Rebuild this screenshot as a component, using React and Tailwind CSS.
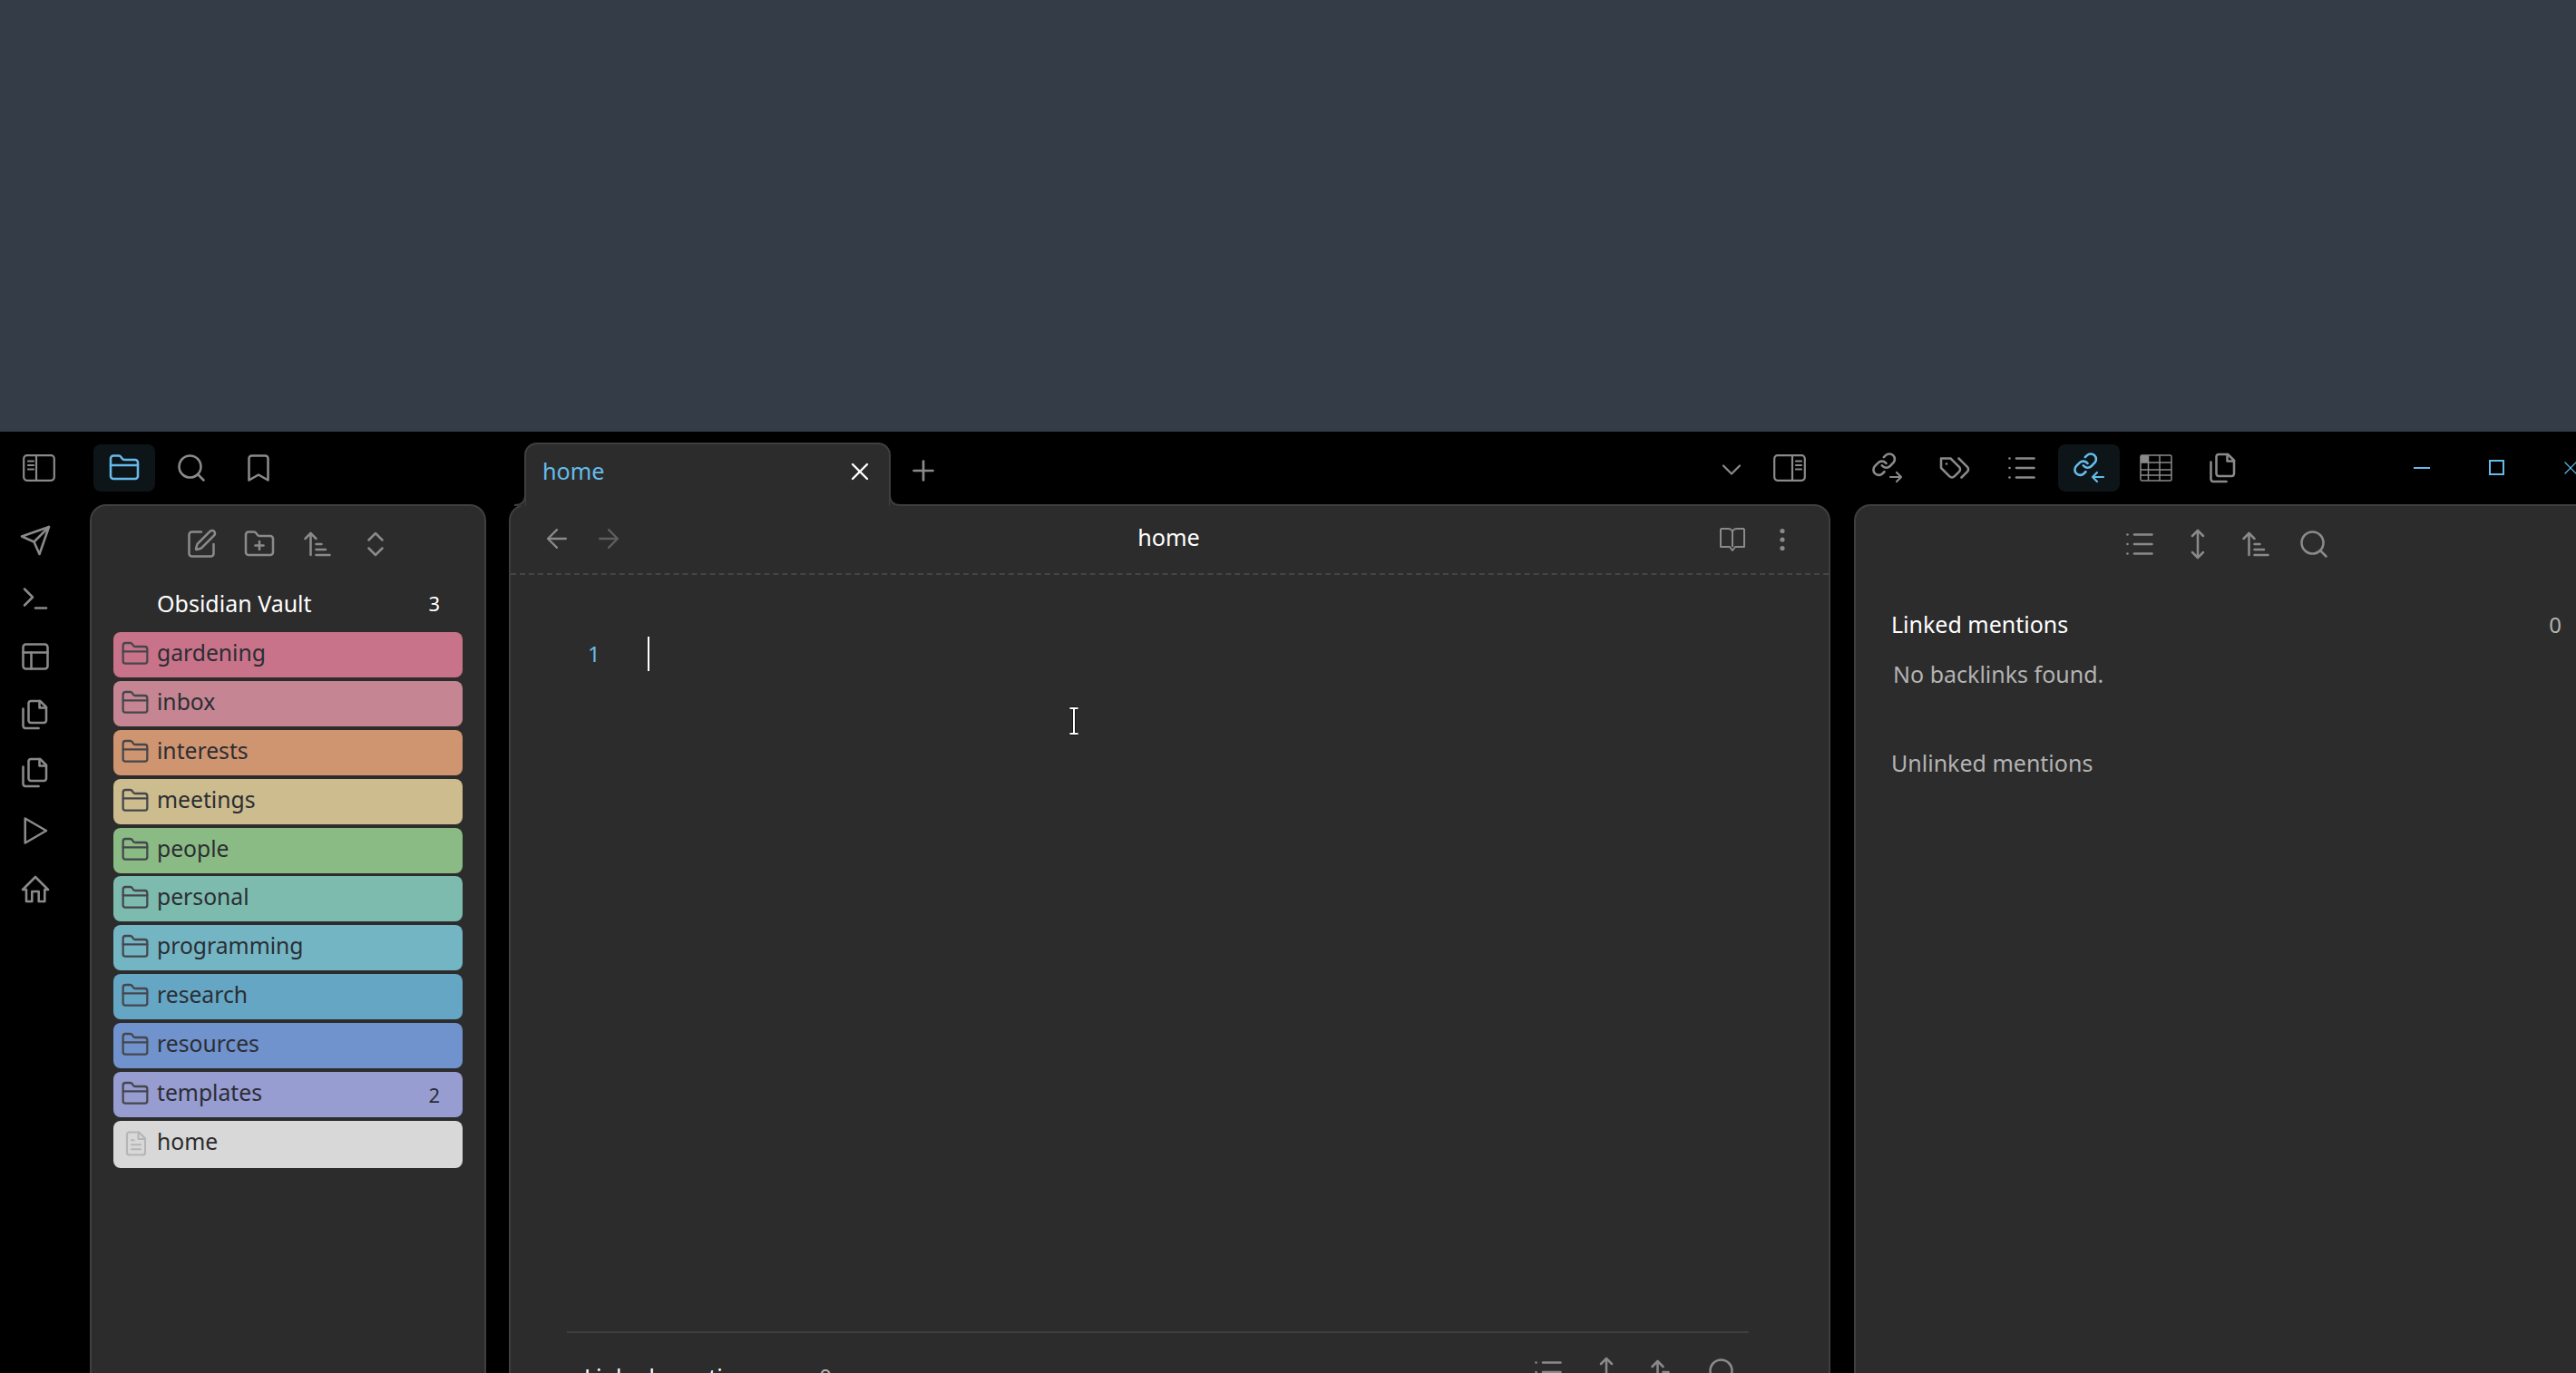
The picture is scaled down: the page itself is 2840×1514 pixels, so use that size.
import React from 'react';
import {
  ArrowLeft, ArrowRight, ArrowUpNarrowWide, Bookmark, ChevronDown, ChevronsUpDown,
  FolderClosed, FolderPlus, List, MoveVertical, PanelsTopLeft, Plus, Search, SquarePen, Terminal, X,
} from 'lucide-react';

const stroke = 1.7;

const Send = ({ className }) => (
  <svg viewBox="0 0 24 24" fill="none" stroke="currentColor" strokeWidth={stroke} strokeLinecap="round" strokeLinejoin="round" className={className}>
    <polygon points="22 2 15 22 11 13 2 9 22 2" />
    <line x1="22" y1="2" x2="11" y2="13" />
  </svg>
);

const Files = ({ className }) => (
  <svg viewBox="0 0 24 24" fill="none" stroke="currentColor" strokeWidth={stroke} strokeLinecap="round" strokeLinejoin="round" className={className}>
    <path d="M15.5 2H8.6c-.4 0-.8.2-1.1.5-.3.3-.5.7-.5 1.1v12.8c0 .4.2.8.5 1.1.3.3.7.5 1.1.5h9.8c.4 0 .8-.2 1.1-.5.3-.3.5-.7.5-1.1V6.5L15.5 2z" />
    <path d="M3 7.6v12.8c0 .4.2.8.5 1.1.3.3.7.5 1.1.5h9.8" />
    <path d="M15 2v5h5" />
  </svg>
);

const PlayIcon = ({ className }) => (
  <svg viewBox="0 0 24 24" fill="none" stroke="currentColor" strokeWidth={stroke} strokeLinejoin="round" className={className}>
    <polygon points="4.5 3 20 12 4.5 21" />
  </svg>
);

const HomeIcon = () => (
  <svg viewBox="0 0 32 32" fill="none" stroke="currentColor" strokeWidth="2.6" strokeLinejoin="round" className="size-[32px]">
    <path d="M16 3 30 17h-3.7v13h-6.6V19h-7.4v11H6V17H2z" />
  </svg>
);

const SidebarLeft = ({ className }) => (
  <svg viewBox="0 0 36 30" fill="none" stroke="currentColor" strokeWidth="2.2" strokeLinecap="round" className={className}>
    <rect x="1.2" y="1.2" width="33.6" height="27.6" rx="3.5" />
    <path d="M15 1.5v27M6 7.5h6M6 12h6M6 16.5h6" />
  </svg>
);

const SidebarRight = ({ className }) => (
  <svg viewBox="0 0 36 30" fill="none" stroke="currentColor" strokeWidth="2.2" strokeLinecap="round" className={className}>
    <rect x="1.2" y="1.2" width="33.6" height="27.6" rx="3.5" />
    <path d="M21 1.5v27M25 7.5h6M25 12h6M25 16.5h6" />
  </svg>
);

const chain = (
  <g transform="scale(1.18)">
    <path d="M10 13a5 5 0 0 0 7.54.54l3-3a5 5 0 0 0-7.07-7.07l-1.72 1.71" />
    <path d="M14 11a5 5 0 0 0-7.54-.54l-3 3a5 5 0 0 0 7.07 7.07l1.71-1.71" />
  </g>
);

const LinksOut = ({ className }) => (
  <svg viewBox="0 0 36 36" fill="none" stroke="currentColor" strokeWidth="2.2" strokeLinecap="round" strokeLinejoin="round" className={className}>
    {chain}
    <path d="M21 28h12M28 23l5 5-5 5" />
  </svg>
);

const LinksIn = ({ className }) => (
  <svg viewBox="0 0 36 36" fill="none" stroke="currentColor" strokeWidth="2.2" strokeLinecap="round" strokeLinejoin="round" className={className}>
    {chain}
    <path d="M34 28H22M27 23l-5 5 5 5" />
  </svg>
);

const Tags = ({ className }) => (
  <svg viewBox="0 0 24 24" fill="none" stroke="currentColor" strokeWidth={stroke} strokeLinecap="round" strokeLinejoin="round" className={className}>
    <path d="M9 5H2v7l6.29 6.29c.94.94 2.48.94 3.42 0l3.58-3.58c.94-.94.94-2.48 0-3.42L9 5Z" />
    <path d="M6 9.01V9" />
    <path d="m15 5 6.3 6.3a2.4 2.4 0 0 1 0 3.4L17 19" />
  </svg>
);

const TableIcon = ({ className }) => (
  <svg viewBox="0 0 36 30" fill="none" stroke="currentColor" strokeWidth="1.5" className={className}>
    <rect x="1" y="1" width="9" height="8" fill="currentColor" stroke="none" />
    <rect x="1" y="1" width="34" height="28" rx="1.5" />
    <path d="M9.5 1v28M22 1v28M1 9h34M1 17h34M1 23h34" />
  </svg>
);

const BookIcon = ({ className }) => (
  <svg viewBox="0 0 30 28" fill="none" stroke="currentColor" strokeWidth="2" strokeLinejoin="round" className={className}>
    <path d="M2 2h8c3 0 5 2 5 4v16M28 2h-8c-3 0-5 2-5 4" />
    <path d="M2 2v20h10l3 4 3-4h10V2" />
  </svg>
);

const Dots = ({ className }) => (
  <svg viewBox="0 0 8 30" fill="currentColor" className={className}>
    <circle cx="4" cy="5.5" r="2.6" />
    <circle cx="4" cy="15" r="2.6" />
    <circle cx="4" cy="24.5" r="2.6" />
  </svg>
);

const NoteIcon = ({ className }) => (
  <svg viewBox="0 0 24 24" fill="none" stroke="currentColor" strokeWidth={stroke} strokeLinecap="round" strokeLinejoin="round" className={className}>
    <path d="M14.5 2H6a2 2 0 0 0-2 2v16a2 2 0 0 0 2 2h12a2 2 0 0 0 2-2V7.5L14.5 2z" />
    <path d="M14 2v6h6" />
    <path d="M16 13H8M16 17H8M10 9H8" />
  </svg>
);

const ribbon = [Send, Terminal, PanelsTopLeft, Files, Files, PlayIcon, HomeIcon];

const folders = [
  { name: 'gardening', cls: 'bg-[#c8738a]' },
  { name: 'inbox', cls: 'bg-[#c58593]' },
  { name: 'interests', cls: 'bg-[#cf9470]' },
  { name: 'meetings', cls: 'bg-[#ccbc8e]' },
  { name: 'people', cls: 'bg-[#8bbb84]' },
  { name: 'personal', cls: 'bg-[#7cbbae]' },
  { name: 'programming', cls: 'bg-[#74b5c4]' },
  { name: 'research', cls: 'bg-[#64a6c4]' },
  { name: 'resources', cls: 'bg-[#7092cd]' },
  { name: 'templates', cls: 'bg-[#979cd1]', count: 2 },
];

const Row = ({ name, cls, count }) => (
  <div className={`h-[50px] rounded-[8px] flex items-center pl-[8px] pr-[25px] text-[#2b2d33] ${cls}`}>
    <FolderClosed strokeWidth={1.7} className="size-[32px] text-[#45474d] shrink-0 -mt-[2px]" />
    <span className="ml-[8px] text-[24.7px] -mt-[5px]">{name}</span>
    {count && <span className="ml-auto text-[22px]">{count}</span>}
  </div>
);

const IBeam = () => (
  <svg viewBox="0 0 14 34" className="absolute left-[614px] top-[220px] w-[14px] h-[34px]">
    <path d="M3 3h8M7 3v28M3 31h8" fill="none" stroke="#000" strokeOpacity="0.5" strokeWidth="4" />
    <path d="M2.5 3h9M7 3v28M2.5 31h9" fill="none" stroke="#fff" strokeWidth="2" />
  </svg>
);

export default function App() {
  return (
    <div className="w-[2840px] h-[1514px] overflow-hidden bg-black flex flex-col font-['Noto_Sans',sans-serif]">
      <div className="h-[476px] shrink-0 bg-[#343c47]" />

      {/* title bar */}
      <div className="h-[80px] shrink-0 flex text-[#8a8a8a]">
        <div className="w-[99px] shrink-0 pl-[25px] pt-[25px]">
          <SidebarLeft className="w-[36px] h-[30px]" />
        </div>
        <div className="w-[462px] shrink-0 pl-[4px] pt-[14px] flex gap-[6px]">
          <div className="w-[68px] h-[52px] rounded-[8px] bg-[#0d1518] flex items-center justify-center text-[#66bbea]">
            <FolderClosed strokeWidth={1.7} className="size-[36px]" />
          </div>
          <div className="w-[68px] h-[52px] flex items-center justify-center">
            <Search strokeWidth={1.7} className="size-[36px]" />
          </div>
          <div className="w-[68px] h-[52px] flex items-center justify-center">
            <Bookmark strokeWidth={1.7} className="size-[36px]" />
          </div>
        </div>

        <div className="w-[1483px] shrink-0 flex pl-[17px] pr-[53px]">
          <div className="relative z-10 mt-[12px] w-[404px] h-[70px] rounded-t-[14px] bg-[#2c2c2c] border-2 border-b-0 border-[#3f3f3f] flex items-start pl-[18px] pr-[16px]">
            <span className="text-[25.2px] leading-[36px] mt-[11px] text-[#66bbea]">home</span>
            <X strokeWidth={1.8} className="ml-auto mt-[14px] size-[32px] text-white" />
            <svg viewBox="0 0 12 12" className="absolute -right-[13px] bottom-0 size-[12px]">
              <path d="M0 0c0 7 4 11 12 11v1H0z" fill="#2c2c2c" />
              <path d="M0 0c0 7 4 11 12 11" fill="none" stroke="#3f3f3f" strokeWidth="2" />
            </svg>
            <svg viewBox="0 0 12 12" className="absolute -left-[13px] bottom-0 size-[12px]">
              <path d="M12 0c0 7-4 11-12 11v1h12z" fill="#2c2c2c" />
              <path d="M12 0c0 7-4 11-12 11" fill="none" stroke="#3f3f3f" strokeWidth="2" />
            </svg>
          </div>
          <Plus strokeWidth={1.8} className="ml-[18px] mt-[25px] size-[36px]" />
          <ChevronDown strokeWidth={1.5} className="ml-auto mt-[24px] size-[36px]" />
          <div className="ml-[28px] pt-[25px]">
            <SidebarRight className="w-[36px] h-[30px]" />
          </div>
        </div>

        <div className="w-[584px] shrink-0 pl-[3px] pt-[14px] flex gap-[6px]">
          <div className="w-[68px] h-[52px] flex items-center justify-center"><LinksOut className="size-[36px]" /></div>
          <div className="w-[68px] h-[52px] flex items-center justify-center"><Tags className="size-[36px]" /></div>
          <div className="w-[68px] h-[52px] flex items-center justify-center"><List strokeWidth={1.7} className="size-[36px]" /></div>
          <div className="w-[68px] h-[52px] rounded-[8px] bg-[#0d1518] flex items-center justify-center text-[#66bbea]"><LinksIn className="size-[36px]" /></div>
          <div className="w-[68px] h-[52px] flex items-center justify-center"><TableIcon className="w-[36px] h-[30px]" /></div>
          <div className="w-[68px] h-[52px] flex items-center justify-center"><Files className="size-[36px]" /></div>
        </div>

        <div className="w-[249px] shrink-0 flex text-[#66bbea]">
          <div className="w-[83px] pt-[39px] flex justify-center">
            <div className="w-[18px] h-[2px] bg-[#66bbea]" />
          </div>
          <div className="w-[83px] pt-[31px] flex justify-center">
            <div className="w-[17px] h-[17px] border-2 border-[#66bbea]" />
          </div>
          <div className="w-[83px] pt-[28px] flex justify-center">
            <X strokeWidth={1.2} className="size-[24px] -ml-[4px]" />
          </div>
        </div>
      </div>

      <div className="h-[958px] shrink-0 flex text-[#8a8a8a]">
        {/* ribbon */}
        <div className="w-[99px] shrink-0 pt-[8px]">
          {ribbon.map((Icon, i) => (
            <div key={i} className="w-[78px] h-[64px] flex items-center justify-center">
              <Icon strokeWidth={1.7} className="size-[36px]" />
            </div>
          ))}
        </div>

        {/* file tree */}
        <div className="w-[437px] shrink-0 rounded-t-[18px] bg-[#2c2c2c] border-2 border-b-0 border-[#3f3f3f]">
          <div className="h-[84px] flex items-center justify-center">
            <div className="w-[64px] flex justify-center"><SquarePen strokeWidth={1.7} className="size-[36px]" /></div>
            <div className="w-[64px] flex justify-center"><FolderPlus strokeWidth={1.7} className="size-[36px]" /></div>
            <div className="w-[64px] flex justify-center"><ArrowUpNarrowWide strokeWidth={1.7} className="size-[36px]" /></div>
            <div className="w-[64px] flex justify-center"><ChevronsUpDown strokeWidth={1.7} className="size-[36px]" /></div>
          </div>
          <div className="h-[55px] flex items-center pl-[72px] pr-[49px] text-white -mt-[4px] mb-[4px]">
            <span className="text-[25px]">Obsidian Vault</span>
            <span className="ml-auto text-[22px]">3</span>
          </div>
          <div className="ml-[24px] w-[385px] flex flex-col gap-[3.9px]">
            {folders.map((f) => (
              <Row key={f.name} {...f} />
            ))}
            <div className="h-[52px] rounded-[8px] flex items-center pl-[10px] bg-[#d8d8d8] text-[#2b2b2b]">
              <NoteIcon className="size-[30px] text-[#b5b5b5] shrink-0 -mt-[2px]" />
              <span className="ml-[8px] text-[24.7px] -mt-[7px]">home</span>
            </div>
          </div>
        </div>

        {/* editor */}
        <div className="relative ml-[25px] w-[1457px] shrink-0 rounded-t-[18px] bg-[#2c2c2c] border-2 border-b-0 border-[#3f3f3f] overflow-hidden">
          <div className="h-[76px] flex items-center border-b-2 border-dashed border-[#454545] pb-[2px]">
            <div className="flex-1 flex pl-[22px]">
              <div className="w-[57px] flex justify-center"><ArrowLeft strokeWidth={1.6} className="size-[34px]" /></div>
              <div className="w-[57px] flex justify-center text-[#5e5e5e]"><ArrowRight strokeWidth={1.6} className="size-[34px]" /></div>
            </div>
            <span className="text-[25.2px] leading-[36px] -mt-[4px] text-white">home</span>
            <div className="flex-1 flex justify-end items-center pr-[24px] mt-[2px]">
              <div className="w-[55px] flex justify-center"><BookIcon className="w-[30px] h-[28px]" /></div>
              <div className="w-[55px] flex justify-center"><Dots className="w-[8px] h-[30px]" /></div>
            </div>
          </div>
          <div className="h-[834px] pl-[85px] pt-[68px] flex items-start">
            <span className="w-[66px] text-[24px] leading-[38px] text-[#66bbea]">1</span>
            <div className="w-[2px] h-[38px] bg-white" />
          </div>
          <div className="ml-[62px] mr-[88px] h-[2px] bg-[#3f3f3f]" />
          <div className="flex items-start pl-[81px] pt-[30px] pr-[85px]">
            <span className="text-[25px] leading-[36px] text-white">Linked mentions</span>
            <span className="ml-[64px] text-[24px] leading-[36px] text-[#b3b3b3]">0</span>
            <div className="ml-auto flex -mt-[5px]">
              <div className="w-[64px] flex justify-center"><List strokeWidth={1.7} className="size-[36px]" /></div>
              <div className="w-[64px] flex justify-center"><MoveVertical strokeWidth={1.7} className="size-[36px]" /></div>
              <div className="w-[64px] flex justify-center"><ArrowUpNarrowWide strokeWidth={1.7} className="size-[36px]" /></div>
              <div className="w-[64px] flex justify-center"><Search strokeWidth={1.7} className="size-[36px]" /></div>
            </div>
          </div>
          <IBeam />
        </div>

        {/* backlinks */}
        <div className="ml-[26px] w-[822px] shrink-0 rounded-t-[18px] bg-[#2c2c2c] border-2 border-b-0 border-[#3f3f3f]">
          <div className="h-[84px] flex items-center justify-center">
            <div className="w-[64px] flex justify-center"><List strokeWidth={1.7} className="size-[36px]" /></div>
            <div className="w-[64px] flex justify-center"><MoveVertical strokeWidth={1.7} className="size-[36px]" /></div>
            <div className="w-[64px] flex justify-center"><ArrowUpNarrowWide strokeWidth={1.7} className="size-[36px]" /></div>
            <div className="w-[64px] flex justify-center"><Search strokeWidth={1.7} className="size-[36px]" /></div>
          </div>
          <div className="pl-[39px] pr-[40px]">
            <div className="flex justify-between mt-[27px] h-[40px] items-center">
              <span className="text-[25px] text-white">Linked mentions</span>
              <span className="text-[24px] text-[#b3b3b3]">0</span>
            </div>
            <div className="mt-[14px] pl-[2px] text-[25px] leading-[40px] text-[#b3b3b3]">No backlinks found.</div>
            <div className="mt-[58px] text-[25px] leading-[40px] text-[#b3b3b3]">Unlinked mentions</div>
          </div>
        </div>
      </div>
    </div>
  );
}
